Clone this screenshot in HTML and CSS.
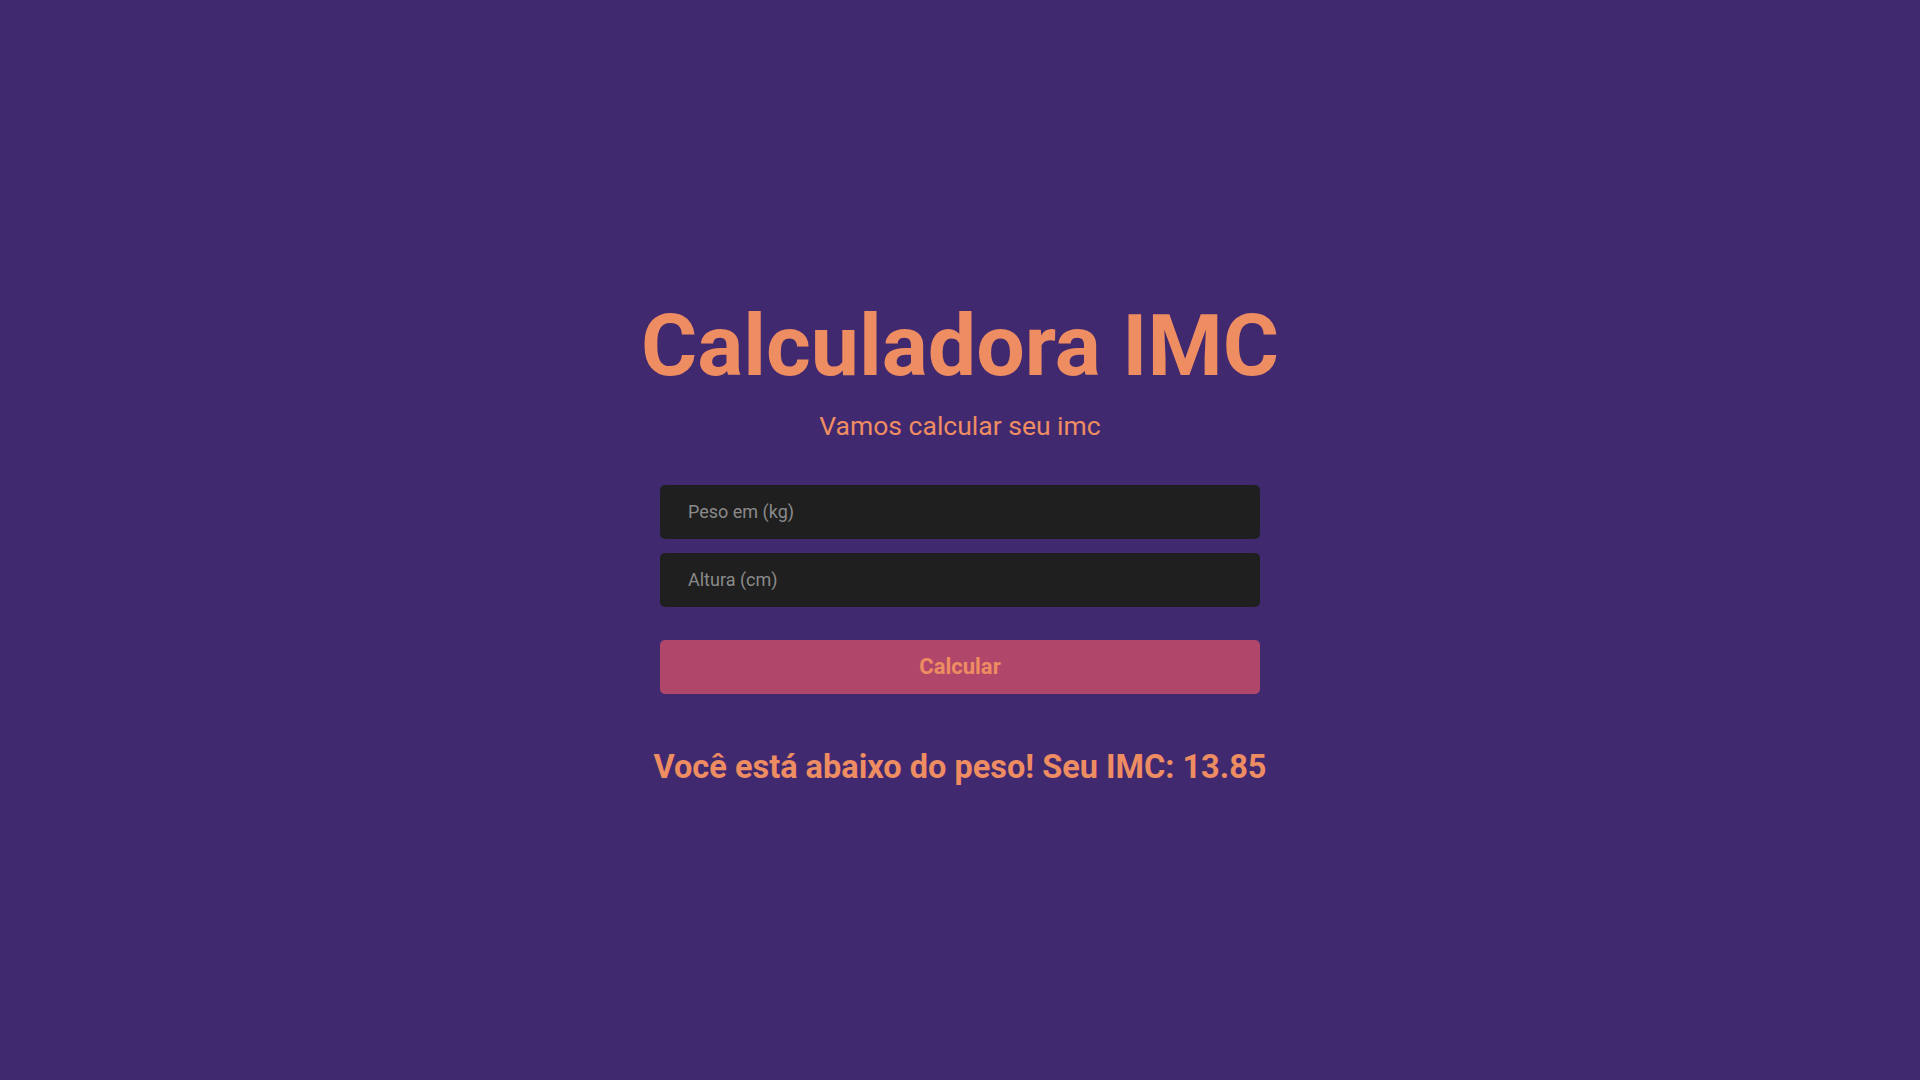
FILE: index.html
```html
<!DOCTYPE html>
<html lang="pt-BR">
<head>
    <meta charset="UTF-8">
    <meta name="viewport" content="width=device-width, initial-scale=1.0">
    <title>Calculadora IMC</title>
    <link rel="stylesheet" href="styles.css">
</head>
<body>
<main class="imc-container">
    <h1 class="imc-title">Calculadora IMC</h1>
    <p class="imc-subtitle">Vamos calcular seu imc</p>

    <form id="imc-form" class="imc-form" onsubmit="event.preventDefault(); calcular();">
        <input type="number" id="peso" class="imc-input" placeholder="Peso em (kg)" />
        <input type="number" id="altura" class="imc-input" placeholder="Altura (cm)" />
        <button type="submit" class="imc-button">Calcular</button>
    </form>

    <h2 id="resultado" class="imc-result">Você está abaixo do peso! Seu IMC: 13.85</h2>
</main>
<script>
function calcular() {
    const peso = parseFloat(document.getElementById('peso').value);
    const altura = parseFloat(document.getElementById('altura').value) / 100;
    const resultado = document.getElementById('resultado');

    if (!peso || !altura) {
        resultado.textContent = 'Preencha peso e altura!';
        return;
    }

    const imc = (peso / (altura * altura)).toFixed(2);
    let msg = '';
    if (imc < 18.5) {
        msg = 'Você está abaixo do peso!';
    } else if (imc < 25) {
        msg = 'Você está com o peso ideal!';
    } else if (imc < 30) {
        msg = 'Você está levemente acima do peso!';
    } else {
        msg = 'Cuidado com a obesidade!';
    }
    resultado.textContent = msg + ' Seu IMC: ' + imc;
}
</script>
</body>
</html>
```

FILE: styles.css
```css
body {
    font-family: Roboto, 'Liberation Sans', Arial, sans-serif;
    margin: 0;
    padding: 0;
    background: #412970;
    min-height: 100vh;
    display: flex;
    align-items: center;
    justify-content: center;
}

.imc-container {
    display: flex;
    flex-direction: column;
    align-items: center;
    color: #ee8c62;
}

.imc-title {
    margin: 0;
    font-size: 86px;
    font-weight: 700;
}

.imc-subtitle {
    margin: 14px 0 0;
    font-size: 26.5px;
    font-weight: 400;
}

.imc-form {
    margin-top: 44px;
    width: 600px;
    display: flex;
    flex-direction: column;
    gap: 14px;
}

.imc-input {
    height: 54px;
    padding: 0 28px;
    border: none;
    border-radius: 5px;
    background: #1f1f1f;
    color: #ddd;
    font-family: inherit;
    font-size: 18px;
    box-sizing: border-box;
    outline: none;
}

.imc-input::placeholder {
    color: #8a8a8a;
}

.imc-button {
    margin-top: 19px;
    height: 54px;
    border: none;
    border-radius: 5px;
    background: #b0476a;
    color: #ee8c62;
    font-family: inherit;
    font-size: 22px;
    font-weight: 700;
    cursor: pointer;
}

.imc-result {
    margin: 54px 0 0;
    font-size: 32.5px;
    font-weight: 700;
}
```
